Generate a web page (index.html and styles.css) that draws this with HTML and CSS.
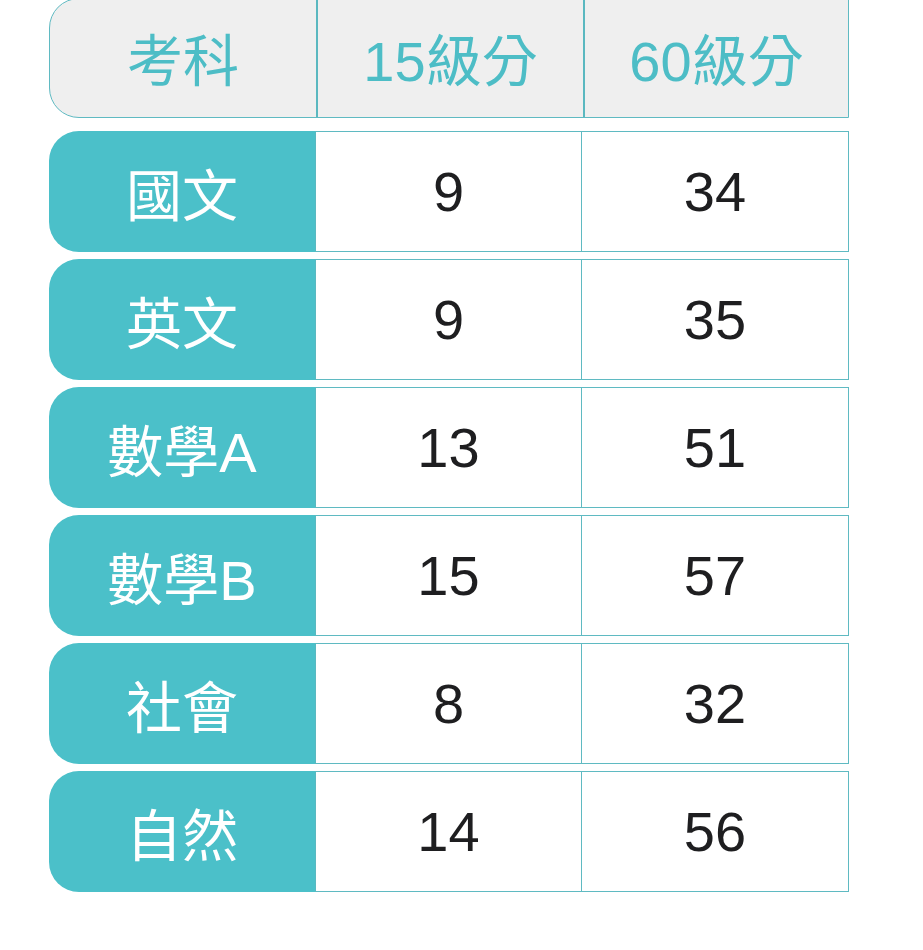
FILE: index.html
```html
<!DOCTYPE html>
<html lang="zh-Hant">
<head>
<meta charset="utf-8">
<title>級分表</title>
<link rel="stylesheet" href="styles.css">
</head>
<body>
<div class="table">
  <div class="thead">
    <div class="hcell">考科</div>
    <div class="hcell sep">15級分</div>
    <div class="hcell sep">60級分</div>
  </div>
  <div class="row">
    <div class="subject">國文</div>
    <div class="val first">9</div>
    <div class="val">34</div>
  </div>
  <div class="row">
    <div class="subject">英文</div>
    <div class="val first">9</div>
    <div class="val">35</div>
  </div>
  <div class="row">
    <div class="subject">數學A</div>
    <div class="val first">13</div>
    <div class="val">51</div>
  </div>
  <div class="row">
    <div class="subject">數學B</div>
    <div class="val first">15</div>
    <div class="val">57</div>
  </div>
  <div class="row">
    <div class="subject">社會</div>
    <div class="val first">8</div>
    <div class="val">32</div>
  </div>
  <div class="row">
    <div class="subject">自然</div>
    <div class="val first">14</div>
    <div class="val">56</div>
  </div>
</div>
</body>
</html>
```

FILE: styles.css
```css
html, body {
  margin: 0;
  padding: 0;
  background: #ffffff;
}

body {
  font-family: "Liberation Sans", "Noto Sans CJK TC", sans-serif;
  font-size: 56px;
  font-weight: 400;
  padding-left: 49px;
}

.table {
  width: 800px;
  display: flex;
  flex-direction: column;
  gap: 7px;
}

.thead {
  box-sizing: border-box;
  height: 120px;
  margin-top: -2px;
  margin-bottom: 6px;
  display: grid;
  grid-template-columns: 266px 267px 1fr;
  background: #efefef;
  border: 1px solid #5fbac2;
  border-radius: 30px 0 0 30px;
  color: #4dbdc6;
}

.hcell {
  display: flex;
  align-items: center;
  justify-content: center;
  padding-bottom: 4px;
}

.hcell.sep {
  border-left: 2px solid #5ab8c0;
}

.row {
  height: 121px;
  display: grid;
  grid-template-columns: 266px 267px 267px;
}

.subject {
  background: #4bc0c9;
  color: #ffffff;
  border-radius: 30px 0 0 30px;
  display: flex;
  align-items: center;
  justify-content: center;
}

.val {
  box-sizing: border-box;
  border-top: 1px solid #5fbac2;
  border-bottom: 1px solid #5fbac2;
  border-right: 1px solid #5fbac2;
  color: #1e1e20;
  display: flex;
  align-items: center;
  justify-content: center;
}

.val.first {
  border-left: 1px solid #5ab8c0;
}
```
